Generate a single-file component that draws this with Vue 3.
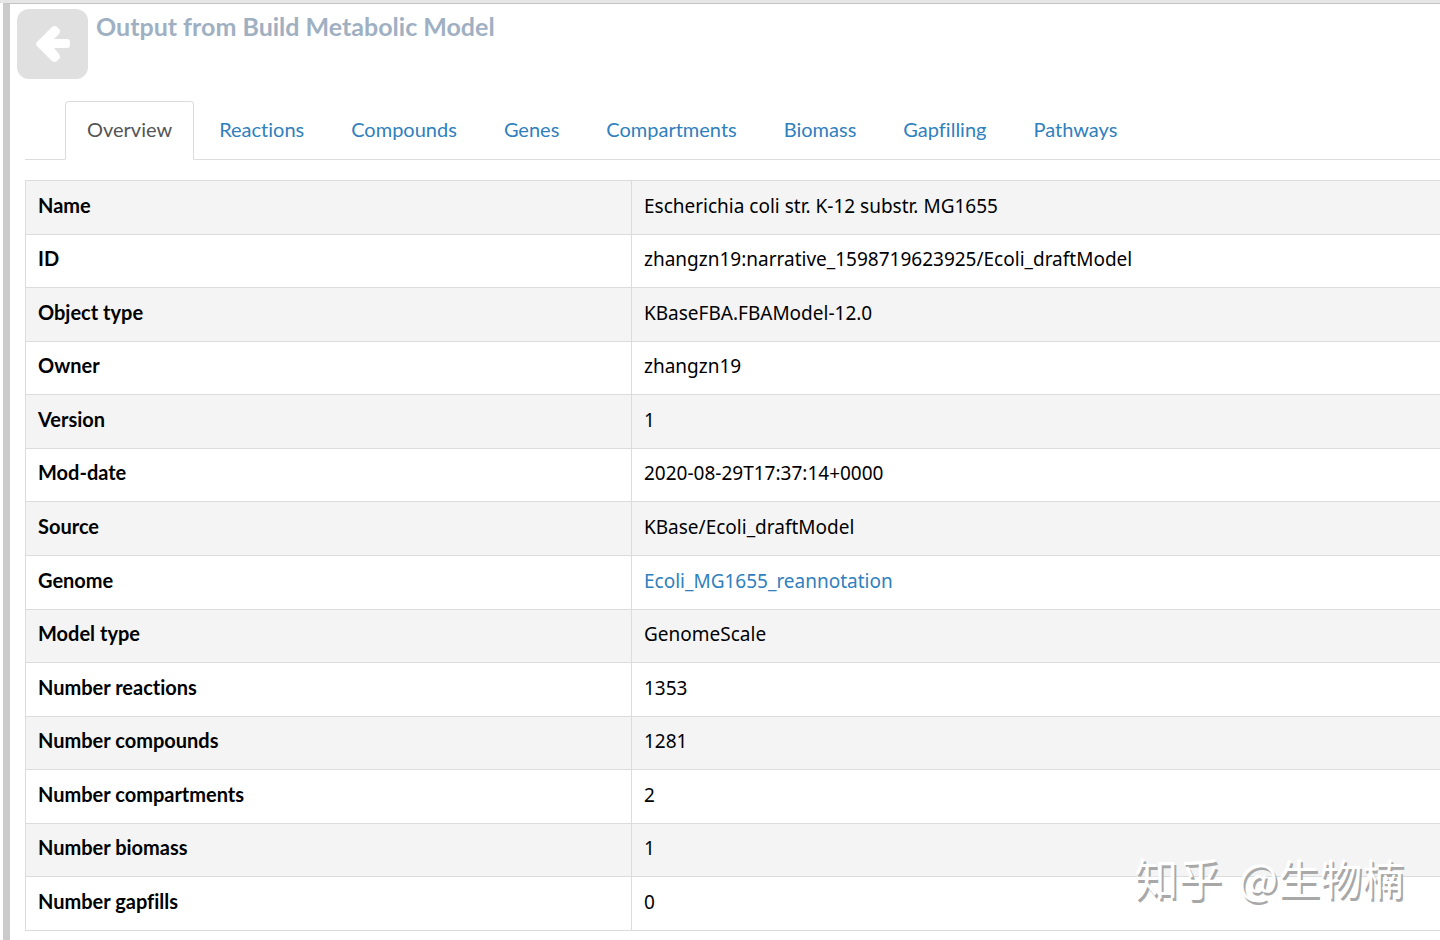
<script setup>
import { ref } from 'vue'

const tabs = ['Overview', 'Reactions', 'Compounds', 'Genes', 'Compartments', 'Biomass', 'Gapfilling', 'Pathways']
const active = ref('Overview')

const rows = [
  { label: 'Name', value: 'Escherichia coli str. K-12 substr. MG1655' },
  { label: 'ID', value: 'zhangzn19:narrative_1598719623925/Ecoli_draftModel' },
  { label: 'Object type', value: 'KBaseFBA.FBAModel-12.0' },
  { label: 'Owner', value: 'zhangzn19' },
  { label: 'Version', value: '1' },
  { label: 'Mod-date', value: '2020-08-29T17:37:14+0000' },
  { label: 'Source', value: 'KBase/Ecoli_draftModel' },
  { label: 'Genome', value: 'Ecoli_MG1655_reannotation', link: true },
  { label: 'Model type', value: 'GenomeScale' },
  { label: 'Number reactions', value: '1353' },
  { label: 'Number compounds', value: '1281' },
  { label: 'Number compartments', value: '2' },
  { label: 'Number biomass', value: '1' },
  { label: 'Number gapfills', value: '0' },
]
</script>

<template>
  <main class="page">
    <div class="panel">
      <header class="header">
        <button class="back" type="button" aria-label="Back">
          <svg viewBox="0 0 36 38" width="36" height="38" aria-hidden="true">
            <path d="M17 2 Q20 0 22 2 L24 4 Q26 6 24 9 L19 14 H32 Q35 14 35 17 V20 Q35 23 32 23 H19 L24 29 Q26 32 24 34 L22 36 Q20 38 17 36 L2 21 Q0 19 2 17 Z" fill="#fff" />
          </svg>
        </button>
        <h1 class="title">Output from Build Metabolic Model</h1>
      </header>

      <nav class="tabs">
        <a
          v-for="tab in tabs"
          :key="tab"
          href="#"
          class="tab"
          :class="{ active: tab === active }"
          @click.prevent="active = tab"
        >{{ tab }}</a>
      </nav>

      <table class="details">
        <colgroup>
          <col class="label-col" />
          <col />
        </colgroup>
        <tbody>
          <tr v-for="row in rows" :key="row.label">
            <th scope="row">{{ row.label }}</th>
            <td>
              <a v-if="row.link" href="#">{{ row.value }}</a>
              <template v-else>{{ row.value }}</template>
            </td>
          </tr>
        </tbody>
      </table>
    </div>
    <span class="watermark">知乎 <span class="handle">@生物楠</span></span>
  </main>
</template>

<style>
body {
  margin: 0;
  background: #fff;
  overflow-x: hidden;
}
</style>

<style scoped>
.page {
  position: relative;
  box-sizing: border-box;
  min-height: 100vh;
  padding-left: 3px;
  border-top: 3px solid #e6e6e6;
  overflow: hidden;
  display: flex;
  color: #000;
  font-family: Lato, "Noto Sans", sans-serif;
  font-size: 20px;
  font-variant-ligatures: none;
  line-height: 28px;
}
.panel {
  flex: 1;
  min-width: 0;
  border-left: 7px solid #cbcbcb;
  border-top: 1px solid #c4c4c4;
}
.header {
  display: flex;
  align-items: flex-start;
  gap: 8px;
  padding: 5px 7px 0;
}
.back {
  display: flex;
  align-items: center;
  justify-content: center;
  width: 71px;
  height: 70px;
  padding: 0;
  border: 0;
  border-radius: 12px;
  background: #e0e0e0;
  cursor: pointer;
}
.title {
  margin: 3px 0 0;
  color: #9fb0c3;
  font-size: 25px;
  line-height: 28px;
  font-weight: 700;
}
.tabs {
  display: flex;
  gap: 3px;
  margin: 22px 0 0 15px;
  padding-left: 40px;
  border-bottom: 1px solid #dcdcdc;
}
.tab {
  margin-bottom: -1px;
  padding: 13px 21px 16px;
  border: 1px solid transparent;
  border-radius: 4px 4px 0 0;
  color: #2f80bd;
  text-decoration: none;
}
.tab.active {
  border-color: #dcdcdc;
  border-bottom-color: #fff;
  background: #fff;
  color: #555;
}
.details {
  width: calc(100% - 14px);
  margin: 20px 0 0 15px;
  border-collapse: collapse;
  table-layout: fixed;
}
.label-col {
  width: 606px;
}
tr {
  height: 54px;
}
tr:nth-child(7n + 2),
tr:nth-child(7n + 4),
tr:nth-child(7n + 6) {
  height: 53px;
}
tr:nth-child(odd) {
  background: #f4f4f4;
}
th,
td {
  padding: 0 12px 6px;
  border: 1px solid #dcdcdc;
  text-align: left;
  vertical-align: middle;
}
th {
  font-weight: 700;
}
td {
  padding-bottom: 4px;
  font-family: "Noto Sans", sans-serif;
  font-size: 19px;
}
td a {
  color: #2f80bd;
  text-decoration: none;
}
.watermark {
  position: absolute;
  right: 36px;
  bottom: 31px;
  display: flex;
  gap: 16px;
  color: #fff;
  font-family: "Noto Sans CJK SC", sans-serif;
  font-size: 44px;
  line-height: 64px;
  text-shadow: 2px 3px 0 #a8a8a8;
  pointer-events: none;
}
.handle {
  font-size: 42px;
}
</style>
